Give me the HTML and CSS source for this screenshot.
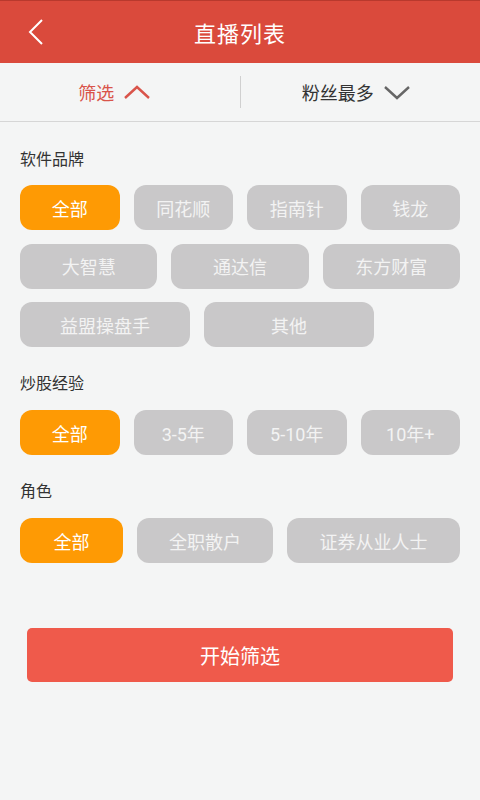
FILE: index.html
```html
<!DOCTYPE html>
<html lang="zh-CN">
<head>
    <meta charset="UTF-8">
    <meta name="viewport" content="width=device-width, initial-scale=1.0">
    <title>直播列表</title>
    <link rel="stylesheet" href="styles.css">
</head>
<body>
    <header class="top-bar">
        <button class="back-btn" aria-label="返回">
            <svg width="16" height="26" viewBox="0 0 16 26"><polyline points="14,1 2,13 14,25" fill="none" stroke="#fff" stroke-width="2"/></svg>
        </button>
        <h1>直播列表</h1>
    </header>

    <div class="sort-bar">
        <div class="sort-item active">
            <span>筛选</span>
            <svg width="28" height="16" viewBox="0 0 28 16"><polyline points="2,14 14,3 26,14" fill="none" stroke="#d9544a" stroke-width="2.4"/></svg>
        </div>
        <div class="sort-divider"></div>
        <div class="sort-item">
            <span>粉丝最多</span>
            <svg width="28" height="16" viewBox="0 0 28 16"><polyline points="2,3 14,14 26,3" fill="none" stroke="#666" stroke-width="2.4"/></svg>
        </div>
    </div>

    <section class="filter-group brand">
        <h2>软件品牌</h2>
        <div class="tag-row cols-4">
            <button class="tag selected">全部</button>
            <button class="tag">同花顺</button>
            <button class="tag">指南针</button>
            <button class="tag">钱龙</button>
        </div>
        <div class="tag-row cols-3">
            <button class="tag">大智慧</button>
            <button class="tag">通达信</button>
            <button class="tag">东方财富</button>
        </div>
        <div class="tag-row cols-2">
            <button class="tag">益盟操盘手</button>
            <button class="tag">其他</button>
        </div>
    </section>

    <section class="filter-group">
        <h2>炒股经验</h2>
        <div class="tag-row cols-4">
            <button class="tag selected">全部</button>
            <button class="tag">3-5年</button>
            <button class="tag">5-10年</button>
            <button class="tag">10年+</button>
        </div>
    </section>

    <section class="filter-group">
        <h2>角色</h2>
        <div class="tag-row cols-role">
            <button class="tag selected">全部</button>
            <button class="tag">全职散户</button>
            <button class="tag">证券从业人士</button>
        </div>
    </section>

    <button class="start-btn">开始筛选</button>
</body>
</html>
```

FILE: styles.css
```css
* {
    box-sizing: border-box;
    margin: 0;
    padding: 0;
    font-family: Roboto, "Noto Sans CJK SC", sans-serif;
}

body {
    background-color: #f4f5f5;
    width: 480px;
    min-height: 800px;
}

button {
    border: none;
    background: none;
    font: inherit;
    cursor: pointer;
}

/* Header */
.top-bar {
    height: 63px;
    background-color: #da4a3c;
    border-top: 1px solid #b8392d;
    display: flex;
    align-items: center;
    justify-content: center;
    position: relative;
}

.top-bar h1 {
    color: #fff;
    font-size: 22px;
    font-weight: 400;
    letter-spacing: 1px;
}

.back-btn {
    position: absolute;
    left: 28px;
    top: 18px;
    display: flex;
}

/* Sort bar */
.sort-bar {
    height: 59px;
    display: grid;
    grid-template-columns: 1fr 1px 1fr;
    align-items: center;
    border-bottom: 1px solid #d6d6d6;
}

.sort-item {
    display: flex;
    align-items: center;
    justify-content: center;
    gap: 9px;
    font-size: 18px;
    color: #333;
    padding-right: 8px;
}

.sort-item.active {
    color: #d9544a;
    padding-right: 10px;
}

.sort-divider {
    height: 32px;
    background-color: #d0d0d0;
}

/* Filter groups */
.filter-group {
    padding: 27px 20px 0;
}

.filter-group h2 {
    font-size: 16px;
    font-weight: 400;
    line-height: 20px;
    color: #333;
    margin-bottom: 16px;
}

.filter-group.brand {
    padding-top: 28px;
}

.filter-group.brand h2 {
    margin-bottom: 15px;
}

.tag-row {
    display: grid;
    gap: 14px;
    margin-bottom: 13.5px;
}

.tag-row:last-child {
    margin-bottom: 0;
}

.cols-4 { grid-template-columns: repeat(4, 1fr); }
.cols-3 { grid-template-columns: repeat(3, 1fr); }
.cols-2 { grid-template-columns: repeat(2, 170px); }
.cols-role { grid-template-columns: 103px 136px 1fr; }

.tag {
    height: 45px;
    border-radius: 12px;
    background-color: #c9c8c9;
    color: #f3f3f3;
    font-size: 18px;
}

.tag.selected {
    background-color: #fe9a04;
    color: #fff;
}

/* Start button */
.start-btn {
    display: block;
    margin: 65px 27px 0;
    width: 426px;
    height: 54px;
    border-radius: 5px;
    background-color: #ef5a4b;
    color: #fff;
    font-size: 20px;
}
```
